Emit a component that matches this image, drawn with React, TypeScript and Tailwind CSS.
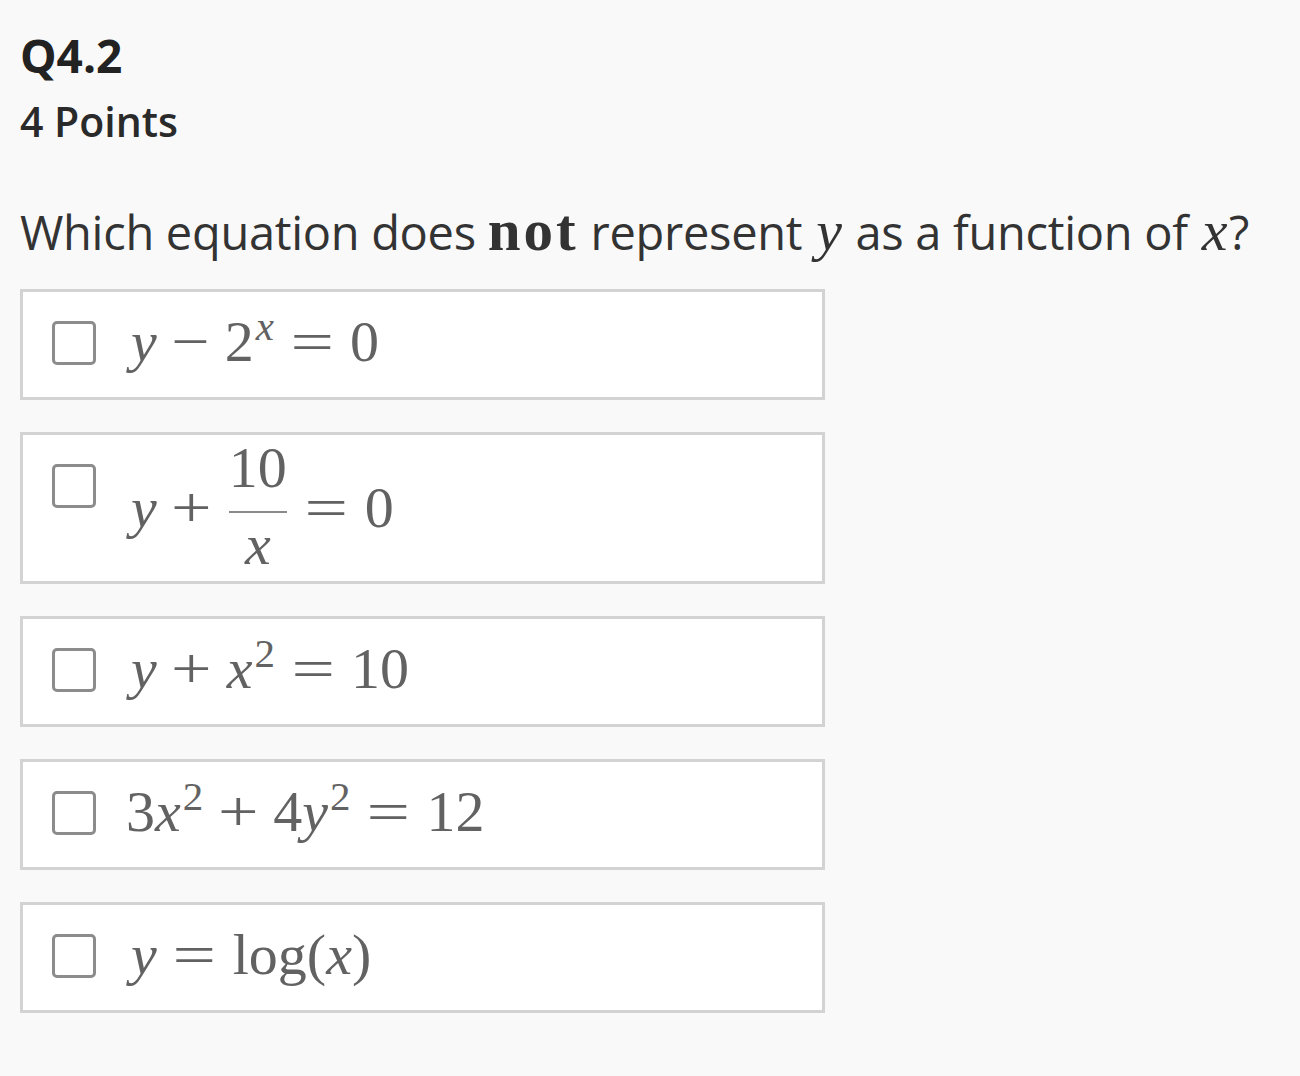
import React from 'react';

const V: React.FC<{ c: string; first?: boolean }> = ({ c, first }) => (
  <span className={`italic ${first ? 'ml-[5px]' : ''}`}>{c}</span>
);

// operators in CM are wider than in Liberation Serif, so stretch them a little
const Minus: React.FC = () => (
  <span className="mx-[12px] inline-block w-[44px] text-center">
    <span className="inline-block scale-x-[1.17]">−</span>
  </span>
);
const Plus: React.FC = () => (
  <span className="mx-[12px] inline-block w-[46px] text-center">
    <span className="inline-block scale-x-[1.24]">+</span>
  </span>
);
const Rel: React.FC = () => (
  <span className="mx-[13px] inline-block w-[50px] text-center">
    <span className="inline-block scale-x-[1.33]">=</span>
  </span>
);
const Sup: React.FC<{ c: string; italic?: boolean }> = ({ c, italic }) => (
  <span className={`ml-[2px] align-[21px] text-[41px] leading-[0] ${italic ? 'italic' : ''}`}>{c}</span>
);

const Checkbox: React.FC = () => (
  <span className="block h-[44px] w-[44px] shrink-0 rounded-[5px] border-[3px] border-[#8c8c8c] bg-white" />
);

const Option: React.FC<{ children: React.ReactNode; tall?: boolean }> = ({ children, tall }) => (
  <div className="mb-[32px] w-[805px] border-[3px] border-[#d3d3d3] bg-white p-[29px]">
    <div className="flex items-start gap-[30px]">
      <Checkbox />
      <div className={tall ? 'h-[88px]' : 'h-[47px]'}>
        <span
          className={`block whitespace-nowrap font-['Liberation_Serif',serif] text-[58px] leading-[42px] text-[#626262] ${
            tall ? '-mt-[16px]' : ''
          }`}
        >
          {children}
        </span>
      </div>
    </div>
  </div>
);

const Fraction: React.FC = () => (
  <span className="mx-[2px] inline-flex flex-col items-center pb-[15px] align-middle">
    <span className="block leading-[40px]">10</span>
    <span className="mt-[23px] block h-[2px] w-full bg-[#8a8a8a]" />
    <span className="mt-[12px] block italic leading-[40px]">x</span>
  </span>
);

export default function App() {
  return (
    <div className="min-h-screen bg-[#f9f9f9] px-[20px] pt-[28px] font-['Open_Sans',sans-serif]">
      <h1 className="text-[46px] font-bold leading-[55px] text-[#222]">Q4.2</h1>
      <div className="mt-[14px] text-[41px] font-semibold leading-[49px] text-[#2a2a2a]">4 Points</div>

      <p className="mt-[55px] whitespace-nowrap text-[47px] leading-[60px] tracking-[-0.3px] text-[#333]">
        Which equation does{' '}
        <span className="font-['Liberation_Serif',serif] text-[59px] font-bold leading-none tracking-[3px]">not</span>{' '}
        represent{' '}
        <span className="mx-[2px] font-['Liberation_Serif',serif] text-[58px] italic leading-none">y</span> as a function
        of <span className="mx-[2px] font-['Liberation_Serif',serif] text-[58px] italic leading-none">x</span>?
      </p>

      <div className="mt-[27px]">
        <Option>
          <V c="y" first />
          <Minus />2<Sup c="x" italic />
          <Rel />0
        </Option>
        <Option tall>
          <V c="y" first />
          <Plus />
          <Fraction />
          <Rel />0
        </Option>
        <Option>
          <V c="y" first />
          <Plus />
          <V c="x" />
          <Sup c="2" />
          <Rel />10
        </Option>
        <Option>
          3<V c="x" />
          <Sup c="2" />
          <Plus />4<V c="y" />
          <Sup c="2" />
          <Rel />12
        </Option>
        <Option>
          <V c="y" first />
          <Rel />
          log(<V c="x" />)
        </Option>
      </div>
    </div>
  );
}
